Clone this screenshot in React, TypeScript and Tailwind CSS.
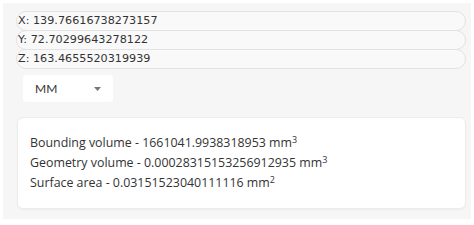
import React from 'react';

const coords = [
  { label: 'X', value: '139.76616738273157' },
  { label: 'Y', value: '72.70299643278122' },
  { label: 'Z', value: '163.4655520319939' },
];

const stats = [
  { label: 'Bounding volume', value: '1661041.9938318953', unit: '3' },
  { label: 'Geometry volume', value: '0.00028315153256912935', unit: '3' },
  { label: 'Surface area', value: '0.03151523040111116', unit: '2' },
];

export default function App() {
  return (
    <div className="w-[474px] h-[225px] bg-white p-[3px]">
      <div className="h-[216px] bg-[#f6f6f6] pt-[8px] pl-[13px] pr-[5px]">
        <div className="flex flex-col">
          {coords.map((c) => (
            <div
              key={c.label}
              className="h-[20px] rounded-full border border-[#e2e2e2] bg-[#f9f9f9] flex items-center pl-px text-[11.2px] text-[#333] -mt-px first:mt-0"
              style={{ fontFamily: '"DejaVu Sans", Verdana, sans-serif' }}
            >
              {c.label}: {c.value}
            </div>
          ))}
        </div>

        <div className="mt-[6px] ml-[7px] w-[90px] h-[27px] bg-white rounded-sm flex items-center justify-between pl-[12px] pr-[12px] text-[12px] text-[#333] font-['Lato',sans-serif]">
          <span>MM</span>
          <svg width="7" height="4" viewBox="0 0 7 4" className="mt-px">
            <path d="M0 0 L7 0 L3.5 4 Z" fill="#777" />
          </svg>
        </div>

        <div className="mt-[15px] ml-px w-[449px] h-[92px] bg-white rounded-md border border-[#ececec] shadow-[0_1px_2px_rgba(0,0,0,0.04)] pl-[12px] pt-[15px] text-[12.4px] leading-[20px] text-[#333] font-['Open_Sans',sans-serif]">
          {stats.map((s) => (
            <div key={s.label}>
              {s.label} - {s.value} mm
              <sup className="text-[9px]">{s.unit}</sup>
            </div>
          ))}
        </div>
      </div>
    </div>
  );
}
